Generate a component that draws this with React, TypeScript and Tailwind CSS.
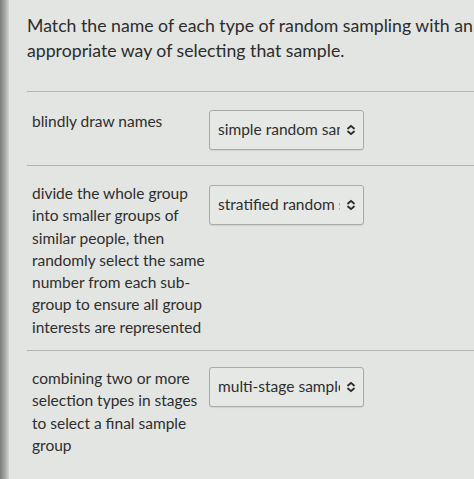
import React from "react";

function Chevron() {
  return (
    <svg width="10" height="12" viewBox="0 0 10 12" fill="none" stroke="#2a2a2a" strokeWidth="1.8" strokeLinecap="round" strokeLinejoin="round">
      <path d="M2 4.5 L5 1.8 L8 4.5" />
      <path d="M2 7.5 L5 10.2 L8 7.5" />
    </svg>
  );
}

function Select({ label }: { label: string }) {
  return (
    <div className="w-[155px] h-[40px] shrink-0 border border-[#a9aba8] rounded-[3px] bg-[#e6e8e5] flex items-center pl-[8px] pr-[7px] shadow-[0_1px_1px_rgba(0,0,0,0.08)]">
      <span className="w-[122px] overflow-hidden whitespace-nowrap text-[15.5px] text-[#2e2e2e] leading-none">{label}</span>
      <span className="ml-[6px] flex items-center"><Chevron /></span>
    </div>
  );
}

function Row({ text, label, pt, pb, selTop }: { text: string[]; label: string; pt: string; pb: string; selTop: string }) {
  return (
    <div className={`flex items-start ${pt} ${pb} pl-[5px]`}>
      <div className="w-[177px] text-[15.5px] leading-[22.3px] text-[#2e2e2e]">
        {text.map((t, i) => (
          <div key={i} className="whitespace-nowrap">{t}</div>
        ))}
      </div>
      <div className={selTop}>
        <Select label={label} />
      </div>
    </div>
  );
}

export default function App() {
  return (
    <div
      className="w-[474px] h-[479px] overflow-hidden flex bg-[#e3e5e2]"
      style={{ fontFamily: "Lato, 'Open Sans', sans-serif" }}
    >
      <div className="w-[9px] shrink-0 bg-gradient-to-r from-[#7b7c7b] via-[#a3a4a3] to-[#d3d5d2]" />
      <div className="flex-1 pl-[18px]">
        <div className="pt-[13px] pb-[28px] text-[17.7px] leading-[25px] text-[#2c2c2c]">
          <div className="whitespace-nowrap">Match the name of each type of random sampling with an</div>
          <div className="whitespace-nowrap">appropriate way of selecting that sample.</div>
        </div>
        <div className="h-[1px] bg-[#b3b5b2]" />
        <Row
          text={["blindly draw names"]}
          label="simple random sampling"
          pt="pt-[18px]"
          pb="pb-[15px]"
          selTop="pt-[0px]"
        />
        <div className="h-[1px] bg-[#b3b5b2]" />
        <Row
          text={[
            "divide the whole group",
            "into smaller groups of",
            "similar people, then",
            "randomly select the same",
            "number from each sub-",
            "group to ensure all group",
            "interests are represented",
          ]}
          label="stratified random sampling"
          pt="pt-[16px]"
          pb="pb-[12px]"
          selTop="pt-[3px]"
        />
        <div className="h-[1px] bg-[#b3b5b2]" />
        <Row
          text={[
            "combining two or more",
            "selection types in stages",
            "to select a final sample",
            "group",
          ]}
          label="multi-stage sample"
          pt="pt-[16px]"
          pb="pb-[12px]"
          selTop="pt-[0px]"
        />
      </div>
    </div>
  );
}
